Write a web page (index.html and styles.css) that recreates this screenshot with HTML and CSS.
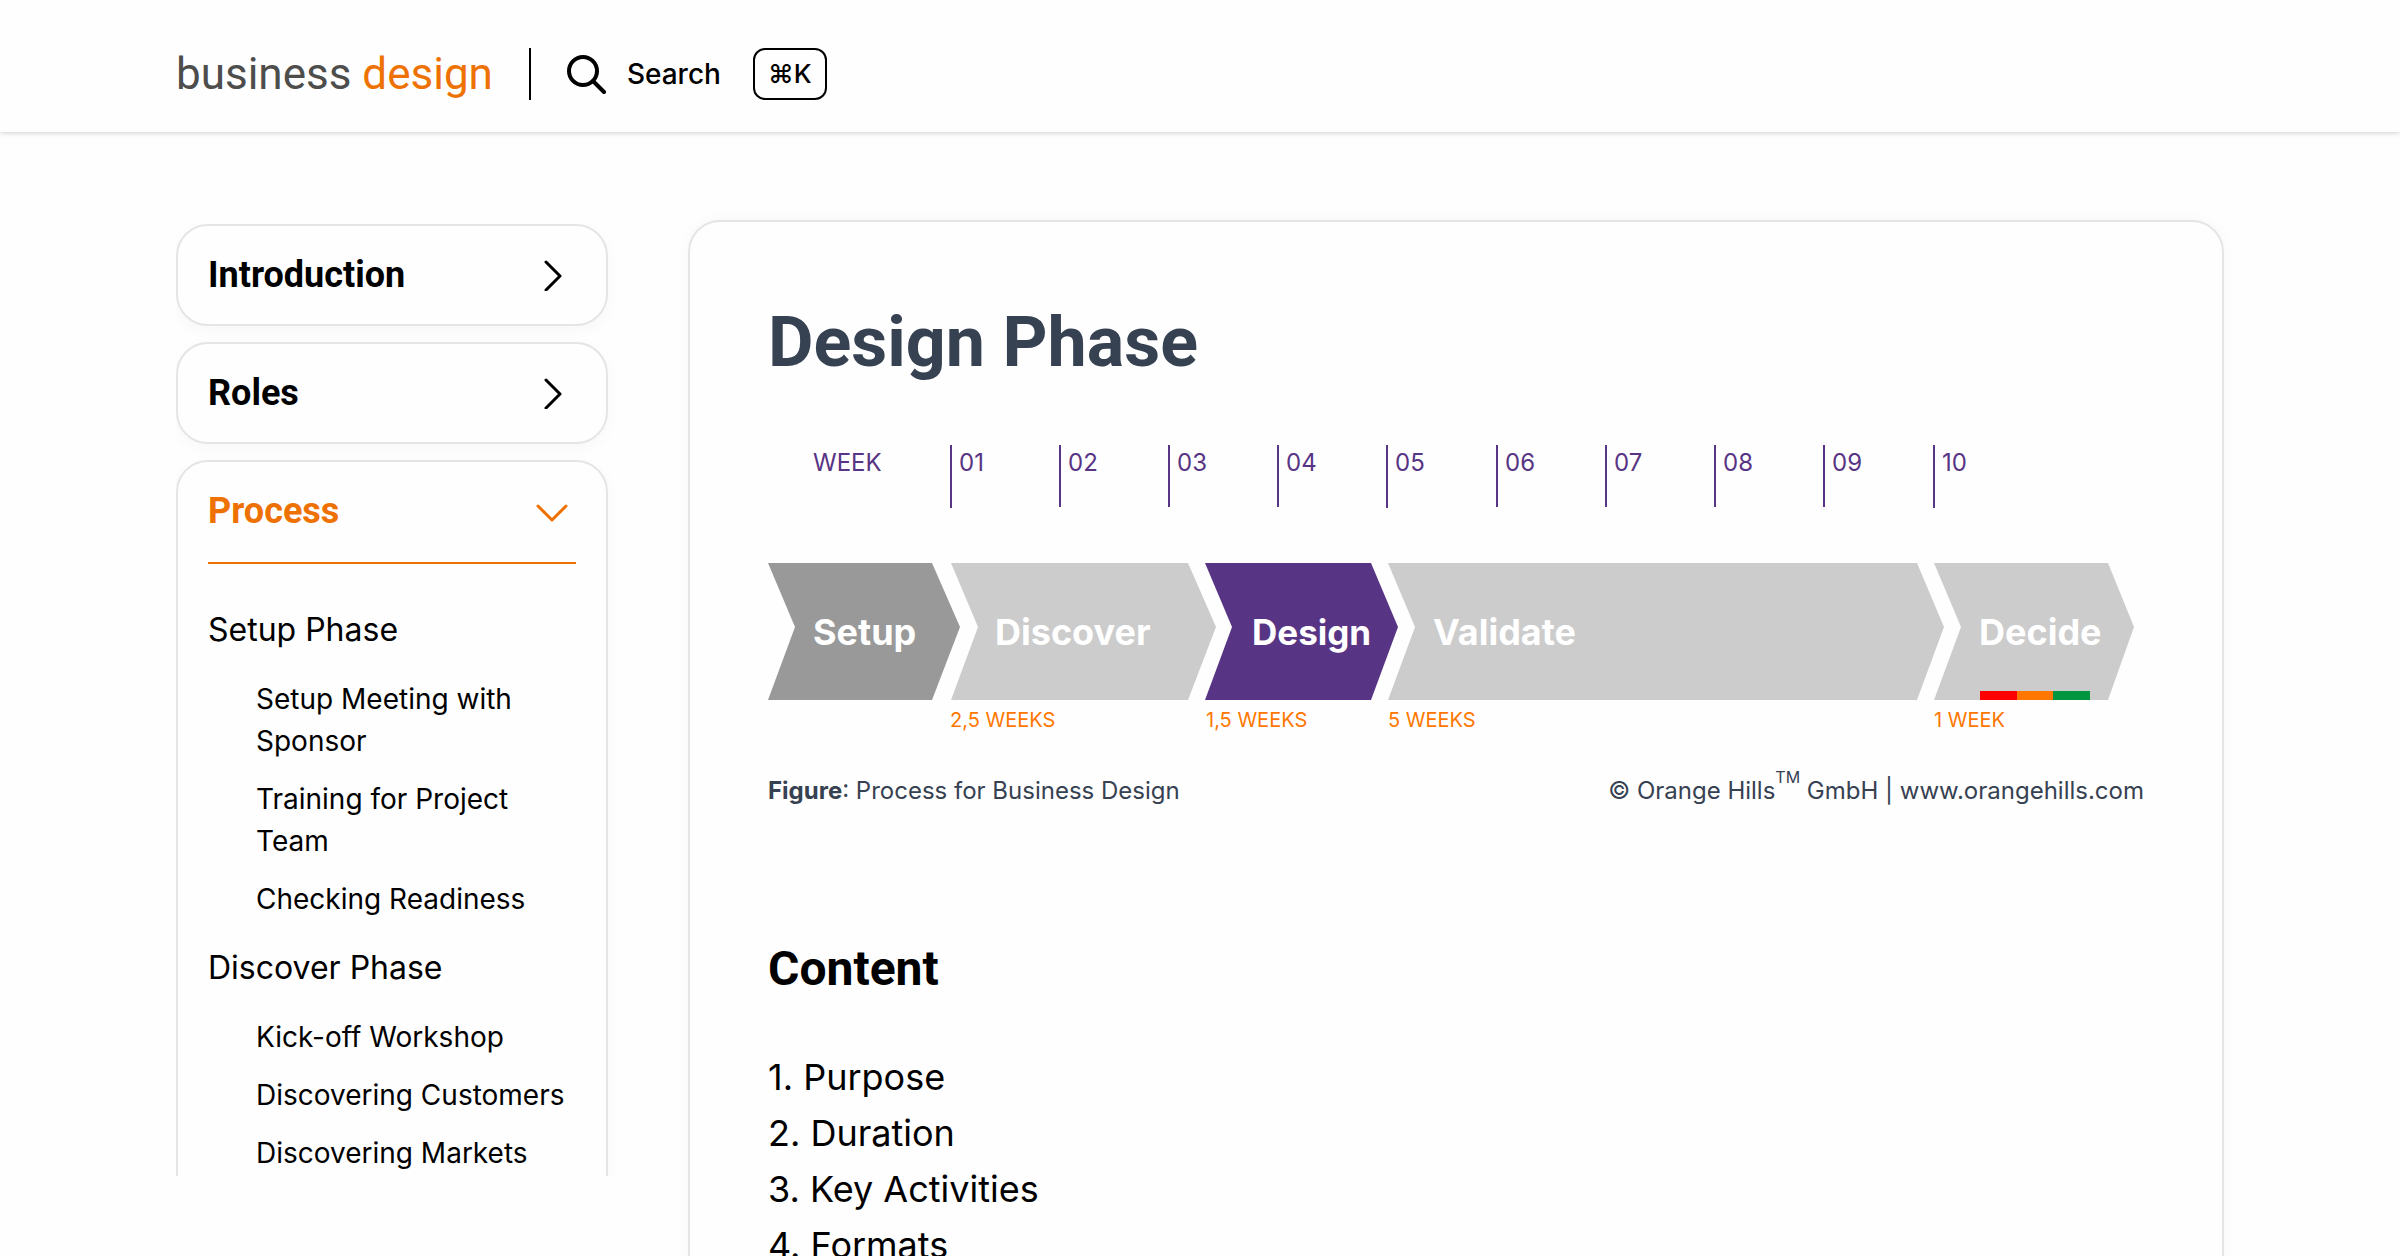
FILE: index.html
```html
<!DOCTYPE html>
<html lang="en">
<head>
<meta charset="utf-8">
<meta name="viewport" content="width=device-width, initial-scale=1">
<title>Design Phase</title>
<link rel="stylesheet" href="styles.css">
</head>
<body>
<header class="topbar">
  <div class="topbar-inner">
    <a class="logo" href="#">business <span class="logo-accent">design</span></a>
    <button class="search" type="button">
      <svg class="search-icon" viewBox="0 0 40 40" aria-hidden="true"><circle cx="16" cy="17" r="14"/><path d="M26 27 37 38"/></svg>
      <span>Search</span>
      <kbd class="shortcut">⌘K</kbd>
    </button>
  </div>
</header>
<div class="layout">
  <nav class="sidebar" aria-label="Chapters">
    <section class="group">
      <button class="group-head" type="button">Introduction
        <svg class="chevron" viewBox="0 0 32 32" aria-hidden="true"><path d="M10 3 24 17 10 31"/></svg>
      </button>
    </section>
    <section class="group">
      <button class="group-head" type="button">Roles
        <svg class="chevron" viewBox="0 0 32 32" aria-hidden="true"><path d="M10 3 24 17 10 31"/></svg>
      </button>
    </section>
    <section class="group">
      <button class="group-head open" type="button" aria-expanded="true">Process
        <svg class="chevron" viewBox="0 0 32 32" aria-hidden="true"><path d="M2 11 16 25 30 11"/></svg>
      </button>
      <div class="group-body">
        <a class="phase" href="#">Setup Phase</a>
        <ul class="steps">
          <li><a href="#">Setup Meeting with Sponsor</a></li>
          <li><a href="#">Training for Project Team</a></li>
          <li><a href="#">Checking Readiness</a></li>
        </ul>
        <a class="phase" href="#">Discover Phase</a>
        <ul class="steps">
          <li><a href="#">Kick-off Workshop</a></li>
          <li><a href="#">Discovering Customers</a></li>
          <li><a href="#">Discovering Markets</a></li>
        </ul>
      </div>
    </section>
  </nav>
  <main class="card">
    <h1 class="title">Design Phase</h1>
    <figure class="figure">
      <svg class="timeline" viewBox="0 0 1376 300" role="img" aria-label="Process timeline">
        <g class="ticks">
          <path d="M183 4V67M292 4V66M401 4V66M510 4V66M619 4V67M729 4V66M838 4V66M947 4V66M1056 4V66M1166 4V67"/>
        </g>
        <g class="weeks">
          <text x="45" y="30">WEEK</text>
          <text x="191" y="30">01</text><text x="300" y="30">02</text><text x="409" y="30">03</text>
          <text x="518" y="30">04</text><text x="627" y="30">05</text><text x="737" y="30">06</text>
          <text x="846" y="30">07</text><text x="955" y="30">08</text><text x="1064" y="30">09</text>
          <text x="1174" y="30">10</text>
        </g>
        <path class="stage-done" d="M0 122H164L192 186 164 259H0L27 186Z"/>
        <path class="stage" d="M183 122H420L448 186 420 259H183L210 186Z"/>
        <path class="stage-active" d="M437 122H603L630 186 603 259H437L464 186Z"/>
        <path class="stage" d="M620 122H1149L1176 186 1149 259H620L647 186Z"/>
        <path class="stage" d="M1166 122H1340L1366 186 1340 259H1166L1193 186Z"/>
        <path fill="#ff0000" d="M1212 250h37v9h-37z"/>
        <path fill="#ff7700" d="M1249 250h36v9h-36z"/>
        <path fill="#009640" d="M1285 250h37v9h-37z"/>
        <g class="names">
          <text x="45" y="204">Setup</text>
          <text x="227" y="204">Discover</text>
          <text class="name-active" x="484" y="204">Design</text>
          <text x="665" y="204">Validate</text>
          <text x="1211" y="204">Decide</text>
        </g>
        <g class="durations">
          <text x="182" y="286">2,5 WEEKS</text>
          <text x="438" y="286">1,5 WEEKS</text>
          <text x="620" y="286">5 WEEKS</text>
          <text x="1166" y="286">1 WEEK</text>
        </g>
      </svg>
      <figcaption class="caption">
        <span><b>Figure</b>: Process for Business Design</span>
        <span>© Orange Hills<sup>TM</sup> GmbH | www.orangehills.com</span>
      </figcaption>
    </figure>
    <h2 class="subtitle">Content</h2>
    <ol class="toc">
      <li><a href="#">Purpose</a></li>
      <li><a href="#">Duration</a></li>
      <li><a href="#">Key Activities</a></li>
      <li><a href="#">Formats</a></li>
    </ol>
  </main>
</div>
</body>
</html>
```
FILE: styles.css
```css
:root {
  --text: "Inter", sans-serif;
  --display: "Roboto", sans-serif;
  --orange: #ee7203;
  --purple: #583484;
  --slate: #364152;
  --line: #e5e5e5;
}

* { box-sizing: border-box; }

body {
  margin: 0;
  background: #fefefe;
  color: #000;
  font-family: var(--text);
}

a { color: inherit; text-decoration: none; }

button {
  border: 0;
  background: none;
  color: inherit;
  cursor: pointer;
}

.topbar {
  height: 132px;
  background: #fefefe;
  box-shadow: 0 0 6px rgba(0, 0, 0, 0.25);
}

.topbar-inner,
.layout {
  max-width: 2048px;
  margin: 0 auto;
}

.topbar-inner {
  display: flex;
  align-items: center;
  gap: 36px;
  padding-top: 48px;
}

.logo {
  color: #4d4d4c;
  font-family: var(--display);
  font-size: 44px;
  line-height: 48px;
  white-space: nowrap;
}

.logo-accent { color: var(--orange); }

.search {
  display: flex;
  align-items: center;
  gap: 20px;
  height: 52px;
  padding: 0 0 0 36px;
  border-left: 2px solid #000;
  font: 500 28px/42px var(--text);
}

.search-icon {
  width: 40px;
  height: 40px;
  fill: none;
  stroke: #000;
  stroke-width: 4;
  stroke-linecap: round;
}

.shortcut {
  height: 52px;
  margin-left: 12px;
  padding: 0 13px;
  border: 2px solid #000;
  border-radius: 12px;
  font: 500 26px/48px var(--text);
}

.layout {
  display: flex;
  gap: 64px;
  align-items: flex-start;
  padding-top: 88px;
}

.sidebar {
  flex: 0 0 448px;
  display: flex;
  flex-direction: column;
  gap: 16px;
  max-height: calc(100vh - 304px);
  margin-top: 4px;
  padding-right: 16px;
  overflow: hidden;
}

.group {
  flex: none;
  padding: 0 30px;
  border: 2px solid var(--line);
  border-radius: 32px;
  background: #fefefe;
  box-shadow: 0 4px 16px rgba(0, 0, 0, 0.03);
}

.group-head {
  display: flex;
  align-items: center;
  justify-content: space-between;
  width: 100%;
  height: 98px;
  padding: 0 8px 0 0;
  font: 700 36px/48px var(--display);
}

.group-head.open {
  height: 102px;
  padding-bottom: 2px;
  border-bottom: 2px solid var(--orange);
  color: var(--orange);
}

.chevron {
  width: 32px;
  height: 32px;
  fill: none;
  stroke: currentColor;
  stroke-width: 3;
  stroke-linecap: round;
  stroke-linejoin: round;
}

.group-body {
  display: flex;
  flex-direction: column;
  gap: 24px;
  padding: 42px 0;
}

.phase {
  font-size: 32px;
  line-height: 48px;
}

.steps {
  display: flex;
  flex-direction: column;
  gap: 16px;
  margin: 0;
  padding: 0 0 0 48px;
  list-style: none;
  font-size: 28px;
  line-height: 42px;
}

.steps li { margin-right: -8px; }

.card {
  flex: 1;
  min-width: 0;
  padding: 72px 78px;
  border: 2px solid var(--line);
  border-radius: 32px;
  background: #fefefe;
  box-shadow: 0 0 16px rgba(0, 0, 0, 0.03);
}

.title {
  margin: 0;
  color: var(--slate);
  font: 700 70px/96px var(--display);
}

.figure { margin: 51px 0 0; }

.timeline {
  display: block;
  width: 100%;
  font-family: var(--text);
}

.ticks { fill: none; stroke: var(--purple); stroke-width: 2; }
.weeks { fill: var(--purple); font-size: 24px; }
.stage { fill: #ccc; }
.stage-done { fill: #999; }
.stage-active { fill: var(--purple); }
.names { fill: #fff; font-size: 36px; font-weight: 700; }
.name-active { font-size: 35px; }
.durations { fill: #ff7700; font-size: 20px; }

.caption {
  display: flex;
  justify-content: space-between;
  padding-top: 32px;
  color: var(--slate);
  font-size: 24px;
  line-height: 36px;
}

.caption sup {
  font-size: 16px;
  line-height: 0;
  vertical-align: 16px;
}

.subtitle {
  margin: 136px 0 0;
  font: 700 48px/48px var(--display);
}

.toc {
  margin: 56px 0 0;
  padding: 0;
  list-style-position: inside;
  font-size: 36px;
  line-height: 56px;
}

.toc li::marker { font-variant-numeric: normal; }
```
